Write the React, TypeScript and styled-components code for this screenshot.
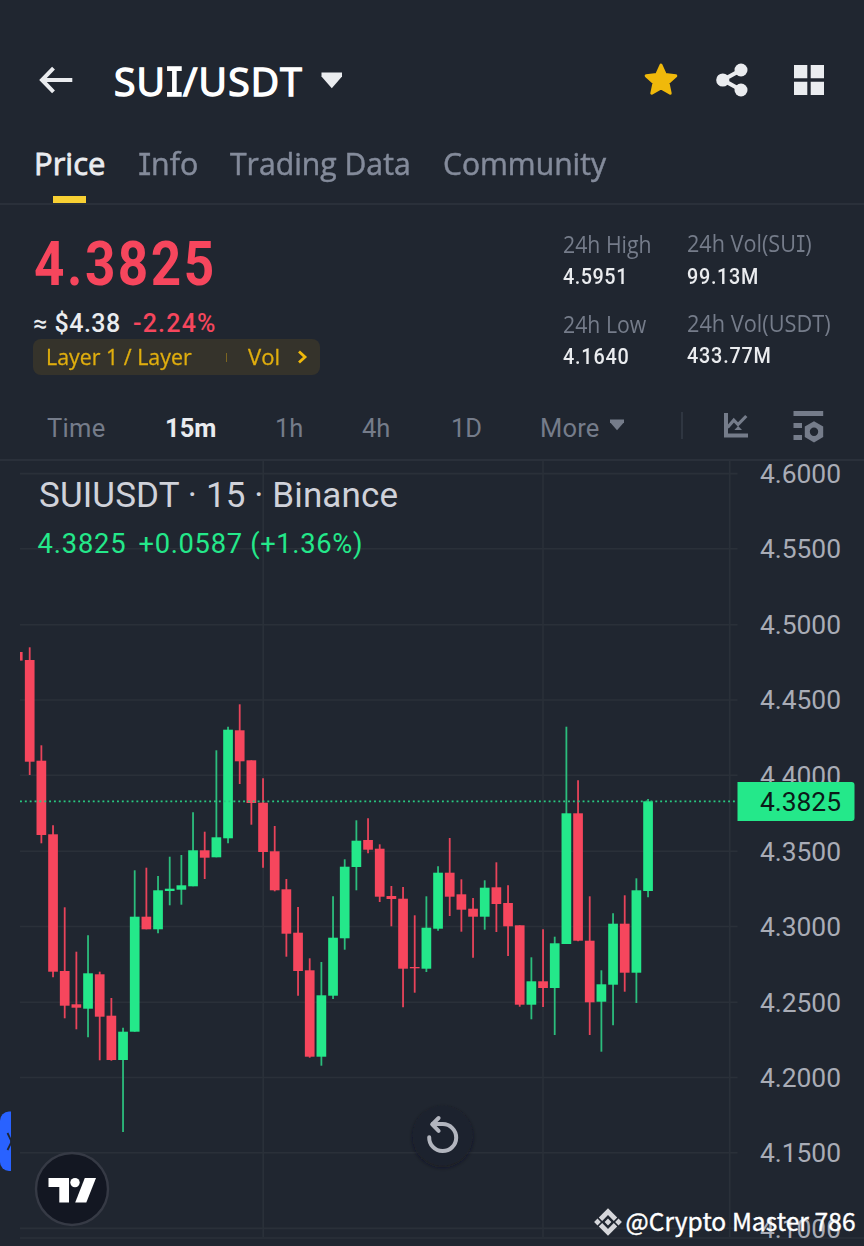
import React from "react";
import styled, { createGlobalStyle } from "styled-components";

const c = {
  bg: "#202630",
  line: "#2a303a",
  grid: "#2a3039",
  text: "#eaecef",
  tab: "#848b9b",
  dim: "#757c8a",
  red: "#f6465d",
  green: "#24e88a",
  wickGreen: "#2bbd7c",
  yellow: "#f0b90b",
  axis: "#a9acb6",
};

const GlobalStyle = createGlobalStyle`
  * { box-sizing: border-box; }
  body {
    margin: 0;
    background: ${c.bg};
    font-family: "Open Sans", "Noto Sans", sans-serif;
  }
`;

const Screen = styled.main`
  width: 864px;
  height: 1246px;
  overflow: hidden;
  display: flex;
  flex-direction: column;
  background: ${c.bg};
  color: ${c.text};
`;

interface TextProps {
  $size: number;
  $weight?: number;
  $color?: string;
  $spacing?: number;
  $scale?: number;
  $stroke?: number;
  $font?: "ui" | "number";
}

const fonts = {
  ui: '"Open Sans", "Noto Sans", sans-serif',
  number: 'Roboto, "Liberation Sans", sans-serif',
};

const Text = styled.span<TextProps>`
  display: block;
  width: max-content;
  white-space: pre;
  line-height: 1;
  font-family: ${(p) => fonts[p.$font ?? "ui"]};
  font-size: ${(p) => p.$size}px;
  font-weight: ${(p) => p.$weight ?? 400};
  color: ${(p) => p.$color ?? c.text};
  letter-spacing: ${(p) => p.$spacing ?? 0}px;
  -webkit-text-stroke: ${(p) => p.$stroke ?? 0}px currentColor;
  transform: scaleX(${(p) => p.$scale ?? 1});
  transform-origin: left center;
`;

/* Capital I with slab serifs, narrowed to sit among proportional letters. */
const SlabI = styled.span`
  display: inline-block;
  width: 0.44em;
  font-family: "DejaVu Sans Mono", monospace;
  font-size: 0.98em;
  font-weight: 400;
  letter-spacing: 0;
  text-indent: -0.08em;
  transform: scaleX(0.86);
`;

const Header = styled.header`
  display: flex;
  align-items: center;
  height: 80px;
  margin-top: 40px;
  padding: 0 40px 0 38px;
`;

const Pair = styled.button`
  display: flex;
  align-items: center;
  width: 229px;
  margin-left: 40px;
  padding: 0;
  border: 0;
  background: none;
  justify-content: space-between;
`;

const PairName = styled.span`
  width: 192px;
  padding-top: 3px;
`;

const Actions = styled.div`
  display: flex;
  align-items: center;
  margin-left: auto;
`;

const Action = styled.span<{ $gap: number }>`
  display: flex;
  margin-left: ${(p) => p.$gap}px;
`;

const Tabs = styled.nav`
  display: grid;
  grid-template-columns: 104px 92px 213px 200px;
  height: 85px;
  padding-left: 34px;
  border-bottom: 2px solid ${c.line};
`;

const Tab = styled.div`
  display: flex;
  flex-direction: column;
  justify-content: space-between;
  padding-top: 28px;
`;

const TabMark = styled.span`
  width: 33px;
  height: 7px;
  margin-left: 19px;
  background: #f8d033;
`;

const Summary = styled.section`
  display: flex;
  height: 190px;
`;

const PriceBlock = styled.div`
  width: 563px;
  padding: 29px 0 0 33px;
`;

const PriceLine = styled.div`
  height: 76px;
  padding-left: 1px;
`;

const ChangeLine = styled.div`
  display: grid;
  grid-template-columns: 100px 100px;
  height: 29px;
  padding-top: 1px;
`;

const Tag = styled.div`
  display: flex;
  align-items: center;
  width: 287px;
  height: 36px;
  padding-left: 13px;
  border-radius: 8px;
  background: #35332b;
`;

const TagLabel = styled.span<{ $width: number }>`
  display: flex;
  width: ${(p) => p.$width}px;
`;

const TagDivider = styled.span`
  width: 1px;
  height: 9px;
  margin: 0 21px 0 0;
  background: #7c6520;
`;

const Stats = styled.div`
  display: grid;
  grid-template-columns: 124px 170px;
  grid-template-rows: 80px 80px;
  padding-top: 27px;
`;

const Stat = styled.div<{ $lift?: boolean }>`
  display: flex;
  flex-direction: column;
  gap: 9px;
  padding-top: ${(p) => (p.$lift ? 0 : 1)}px;
`;

const Intervals = styled.nav`
  display: flex;
  align-items: center;
  height: 66px;
  padding-left: 47px;
  border-bottom: 2px solid ${c.line};
`;

const Interval = styled.span<{ $width: number }>`
  display: flex;
  align-items: center;
  width: ${(p) => p.$width}px;

  ${Text} {
    padding-top: 3px;
  }
`;

const MoreArrow = styled.svg`
  margin-bottom: 4px;
`;

const IntervalDivider = styled.span`
  width: 2px;
  height: 27px;
  margin: 0 41px 3px 0;
  background: #2f3641;
`;

const ChartArea = styled.section`
  height: 785px;
`;

const ChartSvg = styled.svg`
  display: block;
`;

const BackIcon = () => (
  <svg width="36" height="30" viewBox="0 0 36 30" fill="none" stroke={c.text} strokeWidth="4">
    <path d="M34.3 15H4.5M15.5 3.2 4 15 15.5 26.8" />
  </svg>
);

const StarIcon = () => (
  <svg width="34" height="36" viewBox="0 0 34 36">
    <path
      d="M17 3 21.3 12.6 31.8 13.8 24 20.8 26.2 31.2 17 26 7.8 31.2 10 20.8 2.2 13.8 12.7 12.6Z"
      fill={c.yellow}
      stroke={c.yellow}
      strokeWidth="3"
      strokeLinejoin="round"
    />
  </svg>
);

const ShareIcon = () => (
  <svg width="32" height="34" viewBox="0 0 32 34" fill={c.text}>
    <path d="M25 7 7 17 25 27" fill="none" stroke={c.text} strokeWidth="4.2" />
    <circle cx="25" cy="7" r="6.5" />
    <circle cx="6.8" cy="17" r="6.6" />
    <circle cx="25" cy="27" r="6.5" />
  </svg>
);

const GridIcon = () => (
  <svg width="30" height="30" viewBox="0 0 30 30" fill={c.text}>
    <path d="M0 0h13.3v13.3H0zM16.7 0H30v13.3H16.7zM0 16.7h13.3V30H0zM16.7 16.7H30V30H16.7z" />
  </svg>
);

const IndicatorIcon = () => (
  <svg width="24" height="28" viewBox="0 0 24 28" fill="none" stroke={c.dim} strokeWidth="4">
    <path d="M2 0v22.5h22" />
    <path d="M3.5 14.5 9.8 7.2 14 11.5 22.3 3" strokeWidth="3.2" />
    <path d="M14.2 13l3.8 4h-7.6z" fill={c.dim} stroke="none" />
  </svg>
);

const SettingsIcon = () => (
  <svg width="31" height="32" viewBox="0 0 31 32" fill={c.dim}>
    <path d="M.5 0h29.7v5H.5zM.5 12H9v5H.5zM.5 24H9v5H.5z" />
    <path
      fillRule="evenodd"
      d="M21 10.2 30.2 15.4V26L21 31.4 11.8 26V15.4ZM21 16.6a4.2 4.2 0 1 0 0 8.4 4.2 4.2 0 0 0 0-8.4Z"
    />
  </svg>
);

type Candle = [dir: "u" | "d", high: number, top: number, bottom: number, low: number];

const candles: Candle[] = [
  ["d", 647.3, 660, 761.7, 775],
  ["d", 745.3, 760.7, 835, 843.3],
  ["d", 825.3, 834.3, 971.7, 977.3],
  ["d", 907.3, 971, 1005.7, 1018.3],
  ["d", 951.7, 1004.3, 1007.7, 1029.3],
  ["u", 935.3, 973.3, 1008.7, 1037.3],
  ["d", 971.7, 974.3, 1016.7, 1060.3],
  ["d", 998, 1015.7, 1060, 1060.7],
  ["u", 1027.7, 1031.7, 1060, 1132],
  ["u", 870.3, 916.7, 1031.7, 1031.7],
  ["d", 867.7, 916.7, 929.3, 929.3],
  ["u", 876, 890.3, 929.3, 933.3],
  ["u", 856.7, 888.7, 891, 905.3],
  ["u", 855, 885.3, 889.7, 904.7],
  ["u", 812.3, 850.3, 886.3, 886.3],
  ["d", 831.7, 850.3, 857.7, 879],
  ["u", 750.3, 837.3, 857.3, 857.3],
  ["u", 726.7, 729.7, 838.3, 843.3],
  ["d", 704.3, 730.3, 761.3, 784],
  ["d", 760.3, 760.3, 803, 824.7],
  ["d", 778.3, 802.7, 852, 867.7],
  ["d", 826, 851.3, 890.3, 891.3],
  ["d", 879, 889.3, 933.7, 956.7],
  ["d", 907, 932.7, 971, 995.7],
  ["d", 958.3, 970.3, 1056.7, 1057.7],
  ["u", 962, 995.3, 1056.7, 1065.7],
  ["u", 896.3, 937.7, 995.7, 999],
  ["u", 859.3, 866.7, 938.3, 949.7],
  ["u", 820.3, 840.7, 867, 890.3],
  ["d", 818.3, 840, 849.7, 853.3],
  ["d", 844.3, 848.7, 896.7, 902],
  ["d", 886, 896, 899, 926.3],
  ["d", 887, 898.7, 968.7, 1007.3],
  ["d", 915.3, 967, 968.3, 992.7],
  ["u", 896.3, 927.7, 968.7, 972],
  ["u", 866.3, 872.7, 928.7, 930.7],
  ["d", 838, 872.7, 896.7, 916],
  ["d", 879.3, 894.3, 909.7, 931.7],
  ["d", 898, 908.7, 916.7, 957.7],
  ["u", 880.3, 887.7, 916.7, 929.7],
  ["d", 862.3, 887.3, 904, 932],
  ["d", 885.3, 903, 926.3, 956],
  ["d", 925.3, 925.3, 1004.7, 1006.7],
  ["u", 957.3, 981.3, 1004.7, 1019.3],
  ["d", 929.3, 981.3, 988, 1007],
  ["u", 936.7, 943.3, 988, 1035],
  ["u", 726.7, 813.3, 944, 944],
  ["d", 780.3, 813.3, 940.7, 941.3],
  ["d", 896.3, 940.7, 1002.3, 1035],
  ["u", 970.3, 984.3, 1001.7, 1051.7],
  ["u", 913.3, 923.7, 984.7, 1025.3],
  ["d", 895.3, 923.7, 972.7, 991.7],
  ["u", 878.3, 890.3, 972.7, 1003],
  ["u", 799, 801.3, 891, 897.3],
];

const FIRST_X = 29.7;
const STEP_X = 11.667;

const levels: [string, number][] = [
  ["4.6000", 473.6],
  ["4.5500", 548.7],
  ["4.5000", 624.7],
  ["4.4500", 700],
  ["4.4000", 775.3],
  ["4.3500", 851.3],
  ["4.3000", 926.5],
  ["4.2500", 1002.3],
  ["4.2000", 1077.5],
  ["4.1500", 1152.8],
  ["4.1000", 1228.4],
];

const Chart = () => (
  <ChartSvg width="864" height="785" viewBox="0 461 864 785" fontFamily={fonts.number}>
    <defs>
      <filter id="soft" x="-30%" y="-30%" width="160%" height="160%">
        <feDropShadow dx="0" dy="2" stdDeviation="2" floodColor="#10131a" floodOpacity="0.6" />
      </filter>
    </defs>

    <g stroke={c.grid} strokeWidth="1.6">
      {levels.map(([label, y]) => (
        <path key={label} d={`M20 ${y}H737.5`} />
      ))}
      <path d="M263.2 460V1237M543 460V1237M729.7 460V1237M20 1238H864" />
    </g>

    <rect x="20" y="652" width="2.6" height="8.6" fill={c.red} />
    {candles.map(([dir, high, top, bottom, low], i) => {
      const x = FIRST_X + STEP_X * i;
      const up = dir === "u";
      return (
        <g key={i}>
          <path d={`M${x} ${high}V${low}`} stroke={up ? c.wickGreen : "#e8435a"} strokeWidth="1.8" />
          <rect x={x - 4.85} y={top} width="9.7" height={bottom - top} fill={up ? c.green : c.red} />
        </g>
      );
    })}
    <path d="M20 801.4H737" stroke="#28c981" strokeWidth="1.8" strokeDasharray="1.9 2.95" />

    <g fontSize="26.4" fill={c.axis}>
      {levels.map(([label, y]) => (
        <text key={label} x="760" y={y + 9.4} textLength="81">
          {label}
        </text>
      ))}
    </g>
    <path d="M737.5 782H851.5a3 3 0 0 1 3 3v33a3 3 0 0 1-3 3H737.5Z" fill={c.green} />
    <text x="760" y="811" fontSize="26.4" textLength="81" fill="#0b1a18">
      4.3825
    </text>

    <text x="39" y="507.3" fontSize="35" textLength="359" fill="#d0d2da">
      SUIUSDT · 15 · Binance
    </text>
    <g fontSize="27.3" fill={c.green}>
      <text x="37.6" y="552.8" textLength="88">
        4.3825
      </text>
      <text x="138.5" y="552.8" textLength="224">
        +0.0587 (+1.36%)
      </text>
    </g>

    <path d="M11 1111.5H9a9 9 0 0 0-9 9V1162a9 9 0 0 0 9 9h2Z" fill="#2962ff" />
    <path d="M7.5 1133 11 1140.3V1143L7.5 1150" fill="none" stroke="#1e2533" strokeWidth="1.8" />

    <circle cx="72" cy="1189" r="36" fill="#131722" stroke="#363a45" strokeWidth="2.4" />
    <g fill="#fff">
      <path d="M48.5 1178H69V1202.6H59.3V1187H48.5Z" />
      <circle cx="75" cy="1182.6" r="4.7" />
      <path d="M84.8 1178H96L86.3 1202.6H75.2Z" />
    </g>

    <circle cx="442.7" cy="1135.5" r="30" fill="#1f232d" filter="url(#soft)" />
    <g fill="none" stroke="#b2b5be" strokeWidth="4" strokeLinecap="round" strokeLinejoin="round">
      <path d="M429.2 1137.2A13.5 13.5 0 1 0 442.7 1124.1H432.6" />
      <path d="M438.6 1118 432.2 1124.4 438.6 1130.8" />
    </g>

    <g fill="#d5d6da">
      <path d="M608 1208.3 617.2 1217.5 613.8 1220.9 608 1215.1 602.2 1220.9 598.8 1217.5Z" />
      <path d="M608 1235.7 617.2 1226.5 613.8 1223.1 608 1228.9 602.2 1223.1 598.8 1226.5Z" />
      <path d="M597.5 1218.6l3.4 3.4-3.4 3.4-3.4-3.4ZM618.5 1218.6l3.4 3.4-3.4 3.4-3.4-3.4ZM608 1218.6l3.4 3.4-3.4 3.4-3.4-3.4Z" />
    </g>
    <text
      x="625.5"
      y="1230.8"
      fontSize="24.5"
      fontWeight="400"
      textLength="230"
      fill="#fff"
      stroke="#fff"
      strokeWidth="0.4"
      fontFamily='"Noto Sans CJK SC", sans-serif'
    >
      @Crypto Master 786
    </text>
  </ChartSvg>
);

export default function App() {
  return (
    <>
      <GlobalStyle />
      <Screen>
        <Header>
          <BackIcon />
          <Pair>
            <PairName>
              <Text $size={39} $color="#fff" $spacing={1.2} $stroke={1.5}>
                SU<SlabI>I</SlabI>/USDT
              </Text>
            </PairName>
            <svg width="22" height="18" viewBox="0 0 22 18">
              <path d="M.5 1.5h20.5v4L10.8 17.3.5 5.5z" fill={c.text} />
            </svg>
          </Pair>
          <Actions>
            <Action $gap={0}>
              <StarIcon />
            </Action>
            <Action $gap={38}>
              <ShareIcon />
            </Action>
            <Action $gap={46}>
              <GridIcon />
            </Action>
          </Actions>
        </Header>

        <Tabs>
          <Tab>
            <Text $size={31} $stroke={0.8}>Price</Text>
            <TabMark />
          </Tab>
          <Tab>
            <Text $size={31} $stroke={0.5} $color={c.tab} $scale={0.98}>
              <SlabI>I</SlabI>nfo
            </Text>
          </Tab>
          <Tab>
            <Text $size={31} $stroke={0.5} $scale={0.973} $color={c.tab}>Trading Data</Text>
          </Tab>
          <Tab>
            <Text $size={31} $stroke={0.5} $scale={0.97} $color={c.tab}>Community</Text>
          </Tab>
        </Tabs>

        <Summary>
          <PriceBlock>
            <PriceLine>
              <Text $size={61} $weight={700} $font="number" $color={c.red} $scale={0.87} $spacing={2.9}>
                4.3825
              </Text>
            </PriceLine>
            <ChangeLine>
              <Text $size={25} $weight={500} $font="number" $spacing={0.5}>≈ $4.38</Text>
              <Text $size={25} $weight={500} $font="number" $color={c.red} $spacing={1.2}>-2.24%</Text>
            </ChangeLine>
            <Tag>
              <TagLabel $width={180}>
                <Text $size={22.5} $color="#e0ae0e" $scale={0.95} $stroke={0.3}>Layer 1 / Layer</Text>
              </TagLabel>
              <TagDivider />
              <TagLabel $width={50}>
                <Text $size={22.5} $color="#e0ae0e" $scale={0.98} $stroke={0.3}>Vol</Text>
              </TagLabel>
              <svg width="10" height="14" viewBox="0 0 10 14" fill="none" stroke={c.yellow} strokeWidth="2.8">
                <path d="M1 1.5 7 7l-6 5.5" />
              </svg>
            </Tag>
          </PriceBlock>
          <Stats>
            <Stat>
              <Text $size={23} $color={c.dim} $scale={0.925}>24h High</Text>
              <Text $size={22.5} $weight={500} $font="number" $scale={0.88} $spacing={0.6}>4.5951</Text>
            </Stat>
            <Stat $lift>
              <Text $size={23} $color={c.dim} $scale={0.94}>
                24h Vol(SU<SlabI>I</SlabI>)
              </Text>
              <Text $size={22.5} $weight={500} $font="number" $scale={0.88} $spacing={0.8}>99.13M</Text>
            </Stat>
            <Stat>
              <Text $size={23} $color={c.dim} $scale={0.925}>24h Low</Text>
              <Text $size={22.5} $weight={500} $font="number" $scale={0.88} $spacing={0.9}>4.1640</Text>
            </Stat>
            <Stat $lift>
              <Text $size={23} $color={c.dim} $scale={0.945}>24h Vol(USDT)</Text>
              <Text $size={22.5} $weight={500} $font="number" $scale={0.88} $spacing={0.9}>433.77M</Text>
            </Stat>
          </Stats>
        </Summary>

        <Intervals>
          <Interval $width={118}>
            <Text $size={25.5} $font="number" $color={c.dim} $spacing={0.3}>Time</Text>
          </Interval>
          <Interval $width={110}>
            <Text $size={25.5} $weight={700} $font="number">15m</Text>
          </Interval>
          <Interval $width={87}>
            <Text $size={25.5} $font="number" $color={c.dim}>1h</Text>
          </Interval>
          <Interval $width={89}>
            <Text $size={25.5} $font="number" $color={c.dim}>4h</Text>
          </Interval>
          <Interval $width={89}>
            <Text $size={25.5} $font="number" $color={c.dim}>1D</Text>
          </Interval>
          <Interval $width={70}>
            <Text $size={25.5} $font="number" $color={c.dim} $spacing={0.2}>More</Text>
          </Interval>
          <Interval $width={71}>
            <MoreArrow width="14" height="12" viewBox="0 0 14 12">
              <path d="M0 .5h14v2.8L7 11.3 0 3.3z" fill={c.dim} />
            </MoreArrow>
          </Interval>
          <IntervalDivider />
          <Interval $width={69}>
            <IndicatorIcon />
          </Interval>
          <SettingsIcon />
        </Intervals>

        <ChartArea>
          <Chart />
        </ChartArea>
      </Screen>
    </>
  );
}
